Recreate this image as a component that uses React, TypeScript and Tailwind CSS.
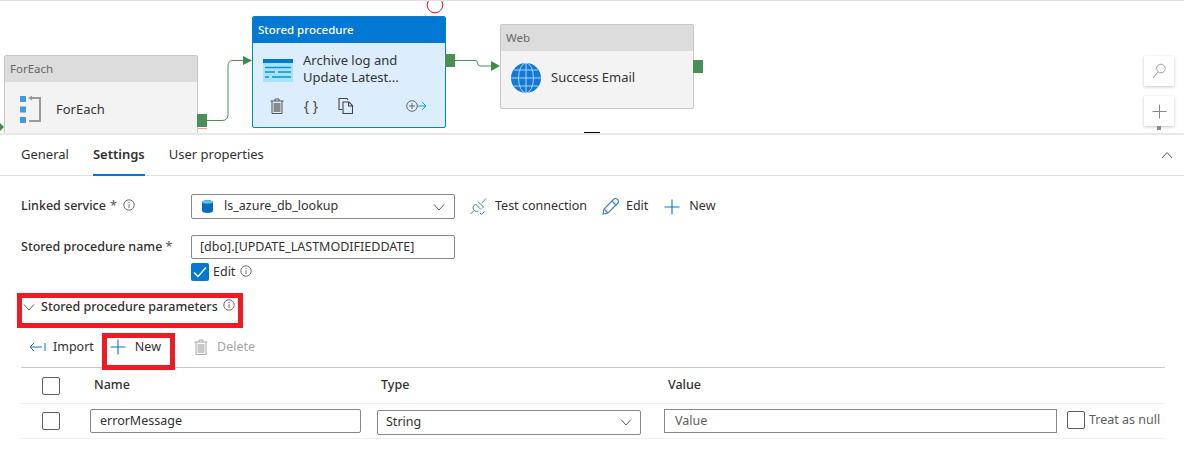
import React from "react";

const font = { fontFamily: '"Noto Sans", "Open Sans", sans-serif' };

function Info({ className = "" }: { className?: string }) {
  return (
    <svg width="12" height="12" viewBox="0 0 12 12" className={className} fill="none" stroke="#605e5c" strokeWidth="0.9">
      <circle cx="6" cy="6" r="5.2" />
      <path d="M6 5.2V9M6 3v1" />
    </svg>
  );
}

function Chevron({ className = "", up = false, color = "#605e5c" }: { className?: string; up?: boolean; color?: string }) {
  return (
    <svg width="12" height="8" viewBox="0 0 12 8" className={className} fill="none" stroke={color} strokeWidth="1">
      <path d={up ? "M1 7l5-5.5L11 7" : "M1 1.5L6 7l5-5.5"} />
    </svg>
  );
}

function Plus({ color = "#0078d4", size = 16 }: { color?: string; size?: number }) {
  return (
    <svg width={size} height={size} viewBox="0 0 16 16" fill="none" stroke={color} strokeWidth="1.1">
      <path d="M8 0.5v15M0.5 8h15" />
    </svg>
  );
}

function Trash({ color = "#605e5c", w = 14, h = 16, fill = "#8a8886" }: { color?: string; w?: number; h?: number; fill?: string }) {
  return (
    <svg width={w} height={h} viewBox="0 0 14 16" fill="none" stroke={color} strokeWidth="1">
      <path d="M0.5 3h13M5 3V1h4v2" />
      <path d="M2 3v12.5h10V3" />
      <path d="M3.5 5h7v9h-7z" fill={fill} stroke="none" />
    </svg>
  );
}

function Box({ className = "" }: { className?: string }) {
  return <span className={"block w-[18px] h-[18px] rounded-[2px] border border-[#605e5c] bg-white shrink-0 " + className} />;
}

function Node({
  header,
  selected = false,
  className,
  children,
}: {
  header: string;
  selected?: boolean;
  className: string;
  children: React.ReactNode;
}) {
  return (
    <div
      className={
        "absolute w-[194px] flex flex-col rounded-[2px] border overflow-hidden " +
        (selected ? "border-[#0f7fb8] bg-[#dcedfd] " : "border-[#c8c8c8] bg-[#f3f3f3] ") +
        className
      }
    >
      <div
        className={
          "h-[26px] shrink-0 flex items-center pl-[5px] text-[11.5px] " +
          (selected ? "bg-[#0078d4] text-white font-medium" : "bg-[#dcdcdc] text-[#666]")
        }
      >
        {header}
      </div>
      {children}
    </div>
  );
}

function Canvas() {
  return (
    <div className="relative h-[135px] shrink-0 overflow-hidden border-t border-[#e1e1e1] border-b-2 border-b-[#e8e8e8] bg-white">
      <svg width="1184" height="133" className="absolute left-0 top-[-1px]" fill="none">
        <circle cx="435" cy="5" r="7.8" stroke="#e81123" strokeWidth="1" />
        <path d="M207 120.5h15q6 0 6-6V66q0-5.500 5-5.500h10" stroke="#4b9055" strokeWidth="1" />
        <path d="M243 56l9 4.500-9 4.500z" fill="#3f8a4b" />
        <path d="M455 60.500h20q2.500 0 2.500 2.500t2.500 3h11" stroke="#4b9055" strokeWidth="1" />
        <path d="M491 61l9 5-9 5z" fill="#3f8a4b" />
        <path d="M0 123l4 4-4 4z" fill="#3f8a4b" />
        <path d="M197 128h10v1h-10z" fill="#f0a080" />
      </svg>

      <Node header="ForEach" className="left-[4px] top-[54px] h-[90px]">
        <div className="flex items-center pl-[15px] pt-[14px]">
          <svg width="21" height="27" viewBox="0 0 21 27" fill="none">
            <path d="M0 0h6v6H0zM0 10.500h6v6H0zM0 21h6v6H0z" fill="#3f9ae0" />
            <path d="M11 2h9v23h-11" stroke="#9a9a9a" strokeWidth="2" />
            <path d="M8 2l4-2.500v5z" fill="#9a9a9a" />
          </svg>
          <span className="ml-[15px] text-[13px] text-[#333]">ForEach</span>
        </div>
      </Node>

      <Node header="Stored procedure" selected className="left-[252px] top-[15px] h-[112px]">
        <div className="flex flex-col flex-1">
          <div className="flex items-start pl-[10px] pt-[9px]">
            <svg width="30" height="23" viewBox="0 0 30 23" className="mt-[7px]" fill="none">
              <path d="M0 0h30v23H0z" fill="#a5e3fb" />
              <path d="M0 0h30v4H0z" fill="#0078d4" />
              <path d="M2 8.500h26M2 13h10M15 13h13M2 18h4M9 18h19" stroke="#0f8fd8" strokeWidth="1.300" />
            </svg>
            <div className="ml-[10px] text-[13px] leading-[17px] text-[#333]">
              Archive log and
              <br />
              Update Latest...
            </div>
          </div>
          <div className="flex items-center pl-[17px] pt-[12px]">
            <Trash color="#555" fill="#8a8a8a" />
            <span className="ml-[19px] w-[16px] text-[14px] leading-[16px] text-[#444] text-center">{"{ }"}</span>
            <svg width="15" height="16" viewBox="0 0 15 16" className="ml-[19px]" fill="none" stroke="#444" strokeWidth="1.100">
              <path d="M5 0.500H1v11h3M5 0.500h4l1 1.500" />
              <path d="M5 4h6l3.500 3.500v8H5zM10.500 4v4h4" fill="#dcedfd" />
            </svg>
            <svg width="21" height="12" viewBox="0 0 21 12" className="ml-[53px]" fill="none">
              <circle cx="6" cy="6" r="5.300" stroke="#666" />
              <path d="M3 6h6M6 3v6" stroke="#666" />
              <path d="M11.500 6H20M16 2l4 4-4 4" stroke="#16a0d8" />
            </svg>
          </div>
        </div>
      </Node>

      <Node header="Web" className="left-[500px] top-[23px] h-[85px]">
        <div className="flex items-center pl-[10px] pt-[12px]">
          <svg width="30" height="30" viewBox="0 0 30 30" fill="none">
            <circle cx="15" cy="15" r="15" fill="#1478d4" />
            <ellipse cx="15" cy="15" rx="7.500" ry="15" stroke="#a8d4f8" />
            <path d="M15 0v30M0 15h30M3 7h24M3 23h24" stroke="#a8d4f8" />
          </svg>
          <span className="ml-[10px] text-[13px] text-[#333]">Success Email</span>
        </div>
      </Node>

      <span className="absolute left-[197px] top-[113px] w-[10px] h-[13px] bg-[#4a8f55]" />
      <span className="absolute left-[445px] top-[53px] w-[10px] h-[13px] bg-[#4a8f55]" />
      <span className="absolute left-[693px] top-[59px] w-[10px] h-[13px] bg-[#4a8f55]" />

      <button className="absolute left-[1144px] top-[55px] w-[30px] h-[30px] bg-white shadow-[0_1px_3px_rgba(0,0,0,0.22)] flex items-center justify-center">
        <svg width="14" height="16" viewBox="0 0 14 16" fill="none" stroke="#a0a0a0">
          <circle cx="9" cy="5.500" r="4.300" />
          <path d="M6 9l-5 6" />
        </svg>
      </button>
      <button className="absolute left-[1144px] top-[95px] w-[30px] h-[30px] bg-white shadow-[0_1px_3px_rgba(0,0,0,0.22)] flex items-center justify-center">
        <Plus color="#8a8a8a" size={15} />
      </button>
      <span className="absolute left-[1157px] top-[125px] w-[4px] h-[4px] bg-[#8a8a8a]" />
      <span className="absolute left-[584px] top-[131px] w-[16px] h-[2px] bg-black" />
    </div>
  );
}

function Tabs() {
  return (
    <div className="h-[41px] shrink-0 flex items-stretch border-b border-[#e1e1e1] pl-[21px] pr-[11px] text-[13px] text-[#323130]">
      <div className="flex items-center mr-[24px]">General</div>
      <div className="flex items-center mr-[24px] font-semibold border-b-2 border-[#0078d4] mb-[-1px]">Settings</div>
      <div className="flex items-center">User properties</div>
      <div className="ml-auto flex items-center pb-[1px]">
        <Chevron up />
      </div>
    </div>
  );
}

function LinkIcon() {
  return (
    <svg width="17" height="17" viewBox="0 0 17 17" fill="none" stroke="#3b7fd4" strokeWidth="1">
      <path d="M0.500 16L4 12.500M12 5l4-4.500M5.500 6L11 11.500M8 3.500L13.500 9l-1.500 1.500M3.500 8l2 -2M3.500 8a3.500 3.500 0 0 0 0 3.500L5 13a3.500 3.500 0 0 0 3.500 0" />
      <path d="M10 15l1.500 1.500 3-3" stroke="#3b7fd4" />
    </svg>
  );
}

function PencilIcon() {
  return (
    <svg width="17" height="17" viewBox="0 0 17 17" fill="none" stroke="#3b7fd4" strokeWidth="1.100">
      <path d="M1 16l1-5L11.500 1.500a2 2 0 0 1 4 4L6 15zM2 11l4 4M10 3l4 4" />
    </svg>
  );
}

function Form() {
  return (
    <div className="relative pl-[21px] flex flex-col">
      <div className="flex items-center h-[25px] mt-[18px]">
        <label className="w-[170px] flex items-center font-medium text-[#323130]">
          Linked service <span className="ml-[4px] text-[#605e5c]">*</span>
          <Info className="ml-[6px] mb-[3px]" />
        </label>
        <div className="w-[264px] h-[25px] rounded-[2px] border border-[#8a8886] flex items-center pl-[10px] pr-[8px]">
          <svg width="11" height="13" viewBox="0 0 11 13">
            <path d="M0 2c0-2.500 11-2.500 11 0v9c0 2.500-11 2.500-11 0z" fill="#0a6cb8" />
            <ellipse cx="5.500" cy="2" rx="5.500" ry="1.700" fill="#5cc0ee" />
          </svg>
          <span className="ml-[11px] text-[#323130]">ls_azure_db_lookup</span>
          <Chevron className="ml-auto mr-[1px]" />
        </div>
        <div className="ml-[15px] flex items-center">
          <LinkIcon />
          <span className="ml-[8px] text-[#323130]">Test connection</span>
          <span className="ml-[15px]"><PencilIcon /></span>
          <span className="ml-[7px] text-[#323130]">Edit</span>
          <span className="ml-[16px]"><Plus /></span>
          <span className="ml-[9px] text-[#323130]">New</span>
        </div>
      </div>

      <div className="flex items-center h-[24px] mt-[16px]">
        <label className="w-[170px] font-medium text-[#323130]">
          Stored procedure name <span className="text-[#605e5c]">*</span>
        </label>
        <div className="w-[264px] h-[24px] rounded-[2px] border border-[#8a8886] flex items-center pl-[8px] text-[#323130]">
          [dbo].[UPDATE_LASTMODIFIEDDATE]
        </div>
      </div>

      <div className="flex items-center h-[18px] mt-[4px] ml-[170px]">
        <span className="w-[18px] h-[18px] rounded-[2px] bg-[#0078d4] flex items-center justify-center">
          <svg width="14" height="12" viewBox="0 0 14 12" fill="none" stroke="white" strokeWidth="1.500">
            <path d="M1 6.500L5 10.500L13 1.500" />
          </svg>
        </span>
        <span className="ml-[4px] text-[#323130]">Edit</span>
        <Info className="ml-[5px] mb-[3px]" />
      </div>

      <div className="flex items-center h-[18px] mt-[17px] pl-[2px]">
        <Chevron />
        <span className="ml-[6px] font-medium text-[#323130]">Stored procedure parameters</span>
        <Info className="ml-[5px] mb-[4px]" />
      </div>

      <div className="flex items-center h-[20px] mt-[21px] pl-[8px]">
        <svg width="17" height="10" viewBox="0 0 17 10" fill="none" stroke="#0078d4" strokeWidth="1">
          <path d="M5 1L1 5l4 4M1 5h12M16 1v8" />
        </svg>
        <span className="ml-[7px] text-[#323130]">Import</span>
        <span className="ml-[16px]"><Plus /></span>
        <span className="ml-[9px] text-[#323130]">New</span>
        <span className="ml-[33px]">
          <Trash color="#a8a8a8" w={14} h={16} fill="#c8c8c8" />
        </span>
        <span className="ml-[9px] text-[#a6a6a6]">Delete</span>
      </div>

      <div className="mt-[10px] mr-[19px] border-t border-[#c8c8c8]">
        <div className="h-[36px] flex items-center border-b border-[#f0f0f0] font-medium text-[#323130]">
          <Box className="ml-[21px]" />
          <span className="ml-[34px] w-[287px]">Name</span>
          <span className="w-[287px]">Type</span>
          <span>Value</span>
        </div>
        <div className="h-[35px] flex items-center border-b border-[#f0f0f0] text-[#323130]">
          <Box className="ml-[21px]" />
          <div className="ml-[30px] w-[271px] h-[24px] rounded-[2px] border border-[#8a8886] flex items-center pl-[9px]">errorMessage</div>
          <div className="ml-[16px] w-[264px] h-[25px] mt-[2px] rounded-[2px] border border-[#8a8886] flex items-center pl-[8px] pr-[8px]">
            String
            <Chevron className="ml-auto" />
          </div>
          <div className="ml-[23px] w-[393px] h-[24px] border border-[#8a8886] flex items-center pl-[10px] text-[#605e5c]">Value</div>
          <Box className="ml-[10px] mb-[2px]" />
          <span className="ml-[4px] mb-[2px] text-[#605e5c]">Treat as null</span>
        </div>
      </div>

      {/* annotation boxes drawn over the form */}
      <span className="absolute left-[17px] top-[117px] w-[226px] h-[35px] border-[5px] border-[#ed1c24] pointer-events-none" />
      <span className="absolute left-[102px] top-[157px] w-[73px] h-[37px] border-[5px] border-[#ed1c24] pointer-events-none" />
    </div>
  );
}

export default function App() {
  return (
    <div style={font} className="w-[1184px] h-[474px] overflow-hidden bg-white flex flex-col text-[12.5px]">
      <Canvas />
      <Tabs />
      <Form />
    </div>
  );
}
